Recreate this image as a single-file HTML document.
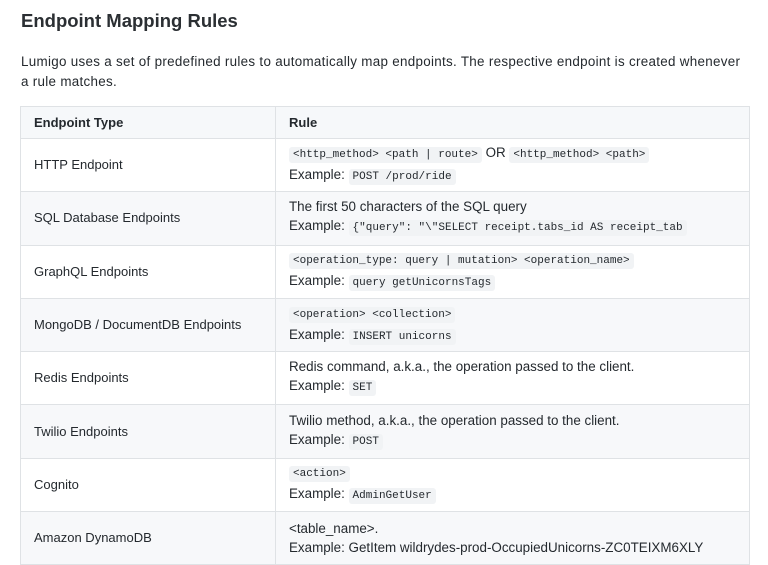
<!DOCTYPE html>
<html><head><meta charset="utf-8"><style>
body{margin:0;background:#fff;font-family:"Liberation Sans",sans-serif;color:#24292e;width:768px;height:553px;overflow:hidden}
h1{position:absolute;left:21px;top:10px;margin:0;font-size:18.5px;font-weight:bold;color:#2b2f33}
p{position:absolute;left:21px;top:52px;margin:0;font-size:13.4px;line-height:20px;width:745px;white-space:nowrap;letter-spacing:0.3px}
table{position:absolute;left:20px;top:106px;border-collapse:collapse;width:730px;font-size:13.4px}
td,th{border:1px solid #dfe2e5;padding:0 13px;text-align:left;vertical-align:middle}
th{height:31px;background:#f6f8fa;font-weight:bold;font-size:13px}
td:first-child,th:first-child{width:228px}
td:first-child{font-size:13px}
td{height:51.3px;line-height:19px;padding-top:0;padding-bottom:1px}
tbody tr:nth-child(odd) td{background:#fff}
tbody tr:nth-child(even) td{background:#f7f8fa}
code{font-family:"Liberation Mono",monospace;font-size:11px;background:#f1f3f5;padding:2px 4px;border-radius:3px}
</style></head><body>
<h1>Endpoint Mapping Rules</h1>
<p>Lumigo uses a set of predefined rules to automatically map endpoints. The respective endpoint is created whenever<br>a rule matches.</p>
<table><thead><tr><th>Endpoint Type</th><th>Rule</th></tr></thead><tbody>
<tr><td>HTTP Endpoint</td><td><code>&lt;http_method&gt; &lt;path | route&gt;</code> OR <code>&lt;http_method&gt; &lt;path&gt;</code><br>Example: <code>POST /prod/ride</code></td></tr>
<tr><td>SQL Database Endpoints</td><td>The first 50 characters of the SQL query<br>Example: <code>{"query": "\"SELECT receipt.tabs_id AS receipt_tab</code></td></tr>
<tr><td>GraphQL Endpoints</td><td><code>&lt;operation_type: query | mutation&gt; &lt;operation_name&gt;</code><br>Example: <code>query getUnicornsTags</code></td></tr>
<tr><td>MongoDB / DocumentDB Endpoints</td><td><code>&lt;operation&gt; &lt;collection&gt;</code><br>Example: <code>INSERT unicorns</code></td></tr>
<tr><td>Redis Endpoints</td><td>Redis command, a.k.a., the operation passed to the client.<br>Example: <code>SET</code></td></tr>
<tr><td>Twilio Endpoints</td><td>Twilio method, a.k.a., the operation passed to the client.<br>Example: <code>POST</code></td></tr>
<tr><td>Cognito</td><td><code>&lt;action&gt;</code><br>Example: <code>AdminGetUser</code></td></tr>
<tr><td>Amazon DynamoDB</td><td>&lt;table_name&gt;.<br>Example: GetItem wildrydes-prod-OccupiedUnicorns-ZC0TEIXM6XLY</td></tr>
</tbody></table>
</body></html>
